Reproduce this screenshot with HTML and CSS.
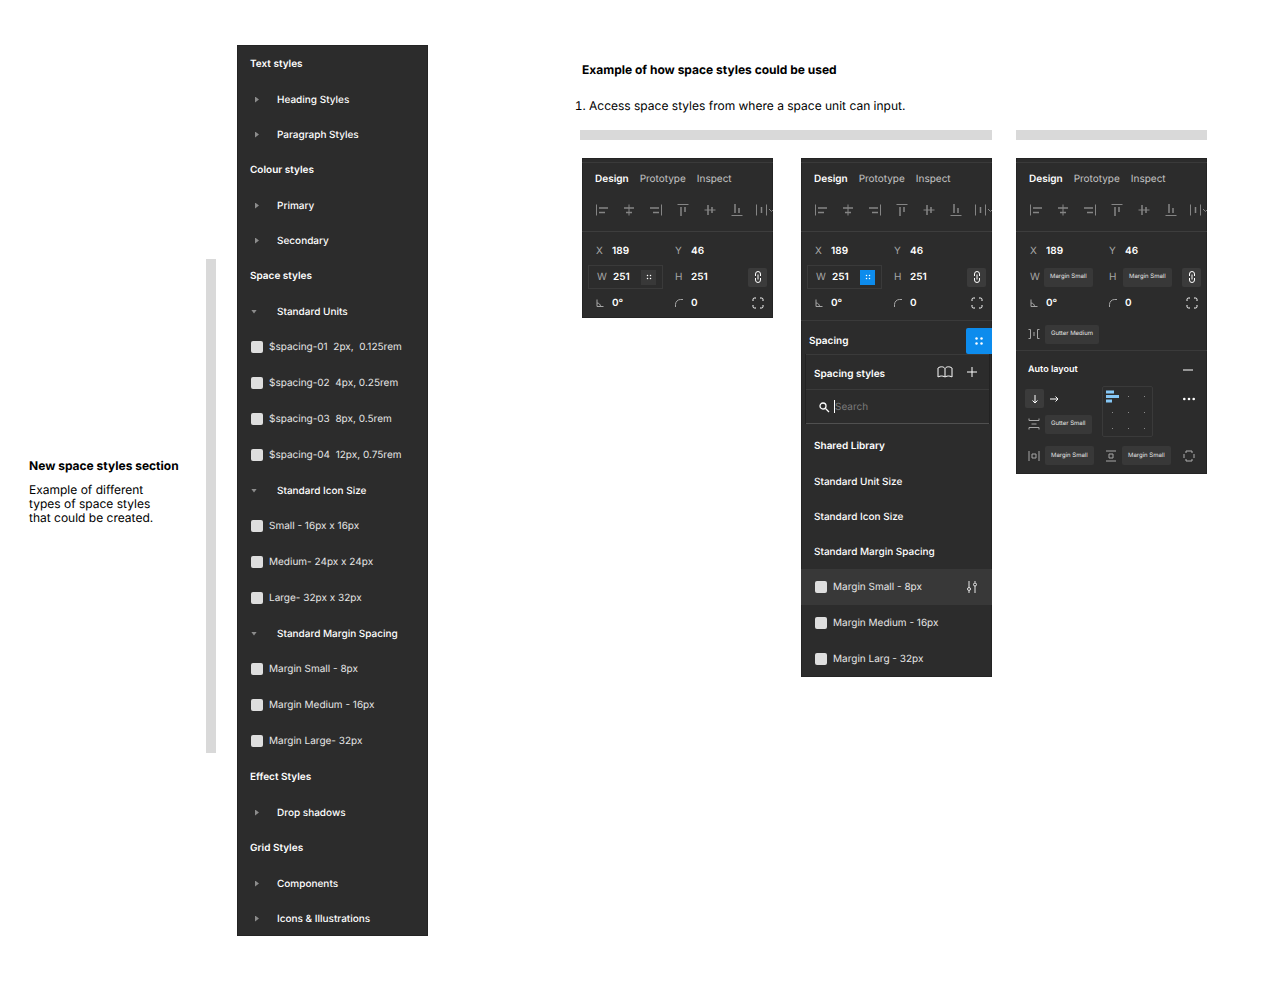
FILE: index.html
```
<!DOCTYPE html>
<html lang="en">
<head>

<meta charset="UTF-8">
<meta name="viewport" content="width=device-width, initial-scale=1">
<title>Space styles</title>
<link rel="stylesheet" href="styles.css">

</head>
<body>

<!-- shared icons -->
<svg class="sprite" aria-hidden="true">
	<symbol id="align-left" viewBox="0 0 12 12"><path d="M.5 .5v11"/><path stroke-width="1.500" d="M3 4h9M3 8.500h6"/></symbol>
	<symbol id="align-center" viewBox="0 0 12 12"><path d="M6 .5v11"/><path stroke-width="1.500" d="M1 4h10M3 8.500h6"/></symbol>
	<symbol id="align-right" viewBox="0 0 12 12"><path d="M11.500 .5v11"/><path stroke-width="1.500" d="M0 4h9M3 8.500h6"/></symbol>
	<symbol id="align-top" viewBox="0 0 12 12"><path d="M.5 .5h11"/><path stroke-width="1.500" d="M4 3v9M8 3v5"/></symbol>
	<symbol id="align-middle" viewBox="0 0 12 12"><path d="M.5 6h11"/><path stroke-width="1.500" d="M4 1v10M8 3v6"/></symbol>
	<symbol id="align-bottom" viewBox="0 0 12 12"><path d="M.5 11.500h11"/><path stroke-width="1.500" d="M4 0v9M8 4v5"/></symbol>
	<symbol id="distribute" viewBox="0 0 18 12"><path d="M1.500 .5v11M11.500 .5v11M14 5l2.500 2.500L19 5"/><path stroke-width="1.500" d="M6.500 3v6"/></symbol>
	<symbol id="angle" viewBox="0 0 12 12"><path d="M3 2.500v7h6.500M3 6c2 0 3.500 1.500 3.500 3.500"/></symbol>
	<symbol id="corner" viewBox="0 0 12 12"><path d="M2.500 10V7.500a5 5 0 0 1 5-5H10"/></symbol>
	<symbol id="link" viewBox="0 0 12 12"><path d="M3.500 5V3a2.500 2.500 0 0 1 5 0v2M3.500 7v2a2.500 2.500 0 0 0 5 0V7M6 3.500v5"/></symbol>
	<symbol id="corners" viewBox="0 0 12 12"><path d="M1 4V2.500A1.500 1.500 0 0 1 2.500 1H4M8 1h1.500A1.500 1.500 0 0 1 11 2.500V4M11 8v1.500A1.500 1.500 0 0 1 9.500 11H8M4 11H2.500A1.500 1.500 0 0 1 1 9.500V8"/></symbol>
	<symbol id="dots" viewBox="0 0 12 12"><g fill="currentColor" stroke="none"><circle cx="3" cy="3" r="1.500"/><circle cx="9" cy="3" r="1.500"/><circle cx="3" cy="9" r="1.500"/><circle cx="9" cy="9" r="1.500"/></g></symbol>
	<symbol id="gutter-x" viewBox="0 0 12 12"><path d="M.5 1.500h2v9h-2M6 4v4M11.500 1.500h-2v9h2"/></symbol>
	<symbol id="gutter-y" viewBox="0 0 12 12"><path d="M1 .5v2h10v-2M3.500 6h5M1 11.500v-2h10v2"/></symbol>
	<symbol id="padding-x" viewBox="0 0 12 12"><path d="M1 1v10M11 1v10M4 4h4v4H4z"/></symbol>
	<symbol id="padding-y" viewBox="0 0 12 12"><path d="M1 1h10M1 11h10M4 4h4v4H4z"/></symbol>
	<symbol id="padding-all" viewBox="0 0 12 12"><path d="M1 4v4M11 4v4M3 3V1h6v2M3 9v2h6V9"/></symbol>
	<symbol id="book" viewBox="0 0 16 12"><path d="M8 2.500C7 1 5.500 .8 4.500 .8 2.500 .8 1 2 1 2v9s1.500-1 3.500-1S8 11 8 11s1.500-1 3.500-1 3.500 1 3.500 1V2S13.500 .8 11.500 .8C10.500 .8 9 1 8 2.500zV11"/></symbol>
	<symbol id="plus" viewBox="0 0 12 12"><path d="M6 1v10M1 6h10"/></symbol>
	<symbol id="minus" viewBox="0 0 12 12"><path d="M1 6h10"/></symbol>
	<symbol id="search" viewBox="0 0 12 12"><circle cx="5" cy="5" r="3" stroke-width="1.300"/><path stroke-width="1.300" d="M7.500 7.500L11 11"/></symbol>
	<symbol id="sliders" viewBox="0 0 12 12"><path d="M3 0v6.500M3 10v2M9 0v1.500M9 5v7"/><circle cx="3" cy="8" r="1.500"/><circle cx="9" cy="3.500" r="1.500"/></symbol>
	<symbol id="arrow-down" viewBox="0 0 12 12"><path d="M6 2v8M3.500 7.500L6 10l2.500-2.500"/></symbol>
	<symbol id="arrow-right" viewBox="0 0 12 12"><path d="M2 6h8M7.500 3.500L10 6 7.500 8.500"/></symbol>
	<symbol id="more" viewBox="0 0 12 12"><g fill="currentColor" stroke="none"><circle cx="1.300" cy="6" r="1.300"/><circle cx="6" cy="6" r="1.300"/><circle cx="10.700" cy="6" r="1.300"/></g></symbol>
</svg>

<main class="board">

	<section class="overview">
		<div class="note">
			<h2>New space styles section</h2>
			<p>Example of different types of space styles that could be created.</p>
		</div>
		<div class="marker-bar"></div>
		<div class="style-panel">
			<h3 class="row heading">Text styles</h3>
			<button class="row folder">Heading Styles</button>
			<button class="row folder">Paragraph Styles</button>
			<h3 class="row heading">Colour styles</h3>
			<button class="row folder">Primary</button>
			<button class="row folder">Secondary</button>
			<h3 class="row heading">Space styles</h3>
			<button class="row folder open">Standard Units</button>
			<div class="row swatch">$spacing-01  2px,  0.125rem</div>
			<div class="row swatch">$spacing-02  4px, 0.25rem</div>
			<div class="row swatch">$spacing-03  8px, 0.5rem</div>
			<div class="row swatch">$spacing-04  12px, 0.75rem</div>
			<button class="row folder open">Standard Icon Size</button>
			<div class="row swatch">Small - 16px x 16px</div>
			<div class="row swatch">Medium- 24px x 24px</div>
			<div class="row swatch">Large- 32px x 32px</div>
			<button class="row folder open">Standard Margin Spacing</button>
			<div class="row swatch">Margin Small - 8px</div>
			<div class="row swatch">Margin Medium - 16px</div>
			<div class="row swatch">Margin Large- 32px</div>
			<h3 class="row heading">Effect Styles</h3>
			<button class="row folder">Drop shadows</button>
			<h3 class="row heading">Grid Styles</h3>
			<button class="row folder">Components</button>
			<button class="row folder">Icons &amp; Illustrations</button>
		</div>
	</section>

	<section class="usage">
		<h2>Example of how space styles could be used</h2>
		<ol>
			<li>Access space styles from where a space unit can input.</li>
		</ol>

		<div class="groups">
			<div class="group wide">
				<div class="bar"></div>
				<div class="panels">

					<div class="inspector">
						<nav class="tabs">
							<button class="active">Design</button>
							<button>Prototype</button>
							<button>Inspect</button>
						</nav>
						<div class="align">
							<button aria-label="Align left"><svg><use href="#align-left"/></svg></button>
							<button aria-label="Align centre"><svg><use href="#align-center"/></svg></button>
							<button aria-label="Align right"><svg><use href="#align-right"/></svg></button>
							<button aria-label="Align top"><svg><use href="#align-top"/></svg></button>
							<button aria-label="Align middle"><svg><use href="#align-middle"/></svg></button>
							<button aria-label="Align bottom"><svg><use href="#align-bottom"/></svg></button>
							<button aria-label="Distribute"><svg class="distribute"><use href="#distribute"/></svg></button>
						</div>
						<div class="fields">
							<label class="field"><span>X</span><input type="text" value="189"></label>
							<label class="field"><span>Y</span><input type="text" value="46"></label>
							<i></i>
							<div class="field focus">
								<label for="w1">W</label><input type="text" id="w1" value="251">
								<button class="token" aria-label="Space styles"><svg><use href="#dots"/></svg></button>
							</div>
							<label class="field"><span>H</span><input type="text" value="251"></label>
							<button class="tool pressed" aria-label="Lock ratio"><svg><use href="#link"/></svg></button>
							<label class="field"><span><svg><use href="#angle"/></svg></span><input type="text" value="0°" aria-label="Rotation"></label>
							<label class="field"><span><svg><use href="#corner"/></svg></span><input type="text" value="0" aria-label="Radius"></label>
							<button class="tool" aria-label="Corners"><svg><use href="#corners"/></svg></button>
						</div>
					</div>

					<div class="inspector">
						<nav class="tabs">
							<button class="active">Design</button>
							<button>Prototype</button>
							<button>Inspect</button>
						</nav>
						<div class="align">
							<button aria-label="Align left"><svg><use href="#align-left"/></svg></button>
							<button aria-label="Align centre"><svg><use href="#align-center"/></svg></button>
							<button aria-label="Align right"><svg><use href="#align-right"/></svg></button>
							<button aria-label="Align top"><svg><use href="#align-top"/></svg></button>
							<button aria-label="Align middle"><svg><use href="#align-middle"/></svg></button>
							<button aria-label="Align bottom"><svg><use href="#align-bottom"/></svg></button>
							<button aria-label="Distribute"><svg class="distribute"><use href="#distribute"/></svg></button>
						</div>
						<div class="fields">
							<label class="field"><span>X</span><input type="text" value="189"></label>
							<label class="field"><span>Y</span><input type="text" value="46"></label>
							<i></i>
							<div class="field focus">
								<label for="w2">W</label><input type="text" id="w2" value="251">
								<button class="token on" aria-label="Space styles"><svg><use href="#dots"/></svg></button>
							</div>
							<label class="field"><span>H</span><input type="text" value="251"></label>
							<button class="tool pressed" aria-label="Lock ratio"><svg><use href="#link"/></svg></button>
							<label class="field"><span><svg><use href="#angle"/></svg></span><input type="text" value="0°" aria-label="Rotation"></label>
							<label class="field"><span><svg><use href="#corner"/></svg></span><input type="text" value="0" aria-label="Radius"></label>
							<button class="tool" aria-label="Corners"><svg><use href="#corners"/></svg></button>
						</div>
						<div class="spacing">
							<h3>Spacing</h3>
							<button aria-label="Space styles"><svg><use href="#dots"/></svg></button>
						</div>
						<div class="picker">
							<div class="picker-head">
								<h3>Spacing styles</h3>
								<button aria-label="Library"><svg class="book"><use href="#book"/></svg></button>
								<button aria-label="Add style"><svg><use href="#plus"/></svg></button>
							</div>
							<label class="search">
								<svg><use href="#search"/></svg>
								<input type="text" placeholder="Search" aria-label="Search">
							</label>
						</div>
						<div class="library">
							<h3 class="row heading">Shared Library</h3>
							<button class="row group-name">Standard Unit Size</button>
							<button class="row group-name">Standard Icon Size</button>
							<button class="row group-name">Standard Margin Spacing</button>
							<div class="row swatch selected"><span>Margin Small - 8px</span><button aria-label="Edit style"><svg><use href="#sliders"/></svg></button></div>
							<div class="row swatch">Margin Medium - 16px</div>
							<div class="row swatch">Margin Larg - 32px</div>
						</div>
					</div>

				</div>
			</div>

			<div class="group">
				<div class="bar"></div>
				<div class="inspector">
					<nav class="tabs">
						<button class="active">Design</button>
						<button>Prototype</button>
						<button>Inspect</button>
					</nav>
					<div class="align">
						<button aria-label="Align left"><svg><use href="#align-left"/></svg></button>
						<button aria-label="Align centre"><svg><use href="#align-center"/></svg></button>
						<button aria-label="Align right"><svg><use href="#align-right"/></svg></button>
						<button aria-label="Align top"><svg><use href="#align-top"/></svg></button>
						<button aria-label="Align middle"><svg><use href="#align-middle"/></svg></button>
						<button aria-label="Align bottom"><svg><use href="#align-bottom"/></svg></button>
						<button aria-label="Distribute"><svg class="distribute"><use href="#distribute"/></svg></button>
					</div>
					<div class="fields">
						<label class="field"><span>X</span><input type="text" value="189"></label>
						<label class="field"><span>Y</span><input type="text" value="46"></label>
						<i></i>
						<div class="field"><span>W</span><button class="chip">Margin Small</button></div>
						<div class="field"><span>H</span><button class="chip">Margin Small</button></div>
						<button class="tool pressed" aria-label="Lock ratio"><svg><use href="#link"/></svg></button>
						<label class="field"><span><svg><use href="#angle"/></svg></span><input type="text" value="0°" aria-label="Rotation"></label>
						<label class="field"><span><svg><use href="#corner"/></svg></span><input type="text" value="0" aria-label="Radius"></label>
						<button class="tool" aria-label="Corners"><svg><use href="#corners"/></svg></button>
					</div>
					<div class="gutter">
						<svg><use href="#gutter-x"/></svg>
						<button class="chip">Gutter Medium</button>
					</div>
					<div class="auto-head">
						<h3>Auto layout</h3>
						<button aria-label="Remove auto layout"><svg><use href="#minus"/></svg></button>
					</div>
					<div class="auto-layout">
						<div class="direction">
							<button class="tool pressed" aria-label="Vertical"><svg><use href="#arrow-down"/></svg></button>
							<button class="tool" aria-label="Horizontal"><svg><use href="#arrow-right"/></svg></button>
						</div>
						<div class="align-grid">
							<svg viewBox="0 0 13 13"><path d="M0 2h8M0 6.500h13M0 11h6"/></svg>
							<b></b><b></b><b></b><b></b><b></b><b></b><b></b><b></b>
						</div>
						<button class="tool" aria-label="More"><svg><use href="#more"/></svg></button>
						<div class="pair"><svg><use href="#gutter-y"/></svg><button class="chip">Gutter Small</button></div>
						<i></i>
						<div class="pair"><svg><use href="#padding-x"/></svg><button class="chip">Margin Small</button></div>
						<div class="pair"><svg><use href="#padding-y"/></svg><button class="chip">Margin Small</button></div>
						<button class="tool muted" aria-label="Separate padding"><svg><use href="#padding-all"/></svg></button>
					</div>
				</div>
			</div>
		</div>
	</section>

</main>

</body>
</html>
```
FILE: styles.css
```
*
{
	box-sizing: border-box;
}

body
{
	margin: 0;
	background-color: #ffffff;
	color: #000000;
	font-family: Inter, "Liberation Sans", sans-serif;
	font-size: 12px;
	line-height: 14px;
	text-rendering: geometricPrecision;
}

h2, h3, p, ol
{
	margin: 0;
	font-size: inherit;
}

button, input
{
	margin: 0;
	padding: 0;
	border: none;
	background: none;
	color: inherit;
	font: inherit;
	text-align: left;
	text-rendering: inherit;
}

button
{
	display: flex;
	align-items: center;
	justify-content: center;
}

svg
{
	display: block;
	flex: none;
	width: 12px;
	height: 12px;
	fill: none;
	stroke: currentColor;
}

.sprite
{
	position: absolute;
	width: 0;
	height: 0;
}

.board
{
	display: flex;
	align-items: flex-start;
	justify-content: space-between;
	padding: 45px 59px 64px 29px;
}

/* left side: the list of styles */

.overview
{
	display: flex;
	flex: 0 1 399px;
}

.note
{
	flex: 1;
	align-self: center;
	padding-top: 3px;
}

.note h2
{
	white-space: nowrap;
}

.note p
{
	max-width: 136px;
	margin-top: 10px;
}

.marker-bar
{
	width: 10px;
	margin: 214px 21px 183px 0;
	background-color: #d9d9d9;
}

.style-panel
{
	width: 191px;
	padding-top: 1px;
	box-shadow: inset 0 0 0 1px #242424;
	background-color: #2c2c2c;
	color: #ffffff;
	font-size: 10px;
}

.row
{
	display: flex;
	align-items: center;
	justify-content: flex-start;
	width: 100%;
	height: 36px;
	white-space: pre;
}

.heading
{
	padding-left: 13px;
	font-weight: 600;
}

.folder
{
	height: 35px;
	padding-left: 18px;
	font-weight: 500;
}

.folder::before
{
	content: "";
	width: 22px;
	height: 6px;
	background: linear-gradient(#8c8c8c, #8c8c8c) no-repeat 0 0 / 4px 6px;
	clip-path: polygon(0 0, 4px 3px, 0 6px);
}

.folder.open
{
	padding-left: 14px;
}

.folder.open::before
{
	width: 26px;
	height: 4px;
	background-size: 6px 4px;
	clip-path: polygon(0 0, 6px 0, 3px 4px);
}

.swatch
{
	gap: 6px;
	padding-left: 14px;
	color: #e6e6e6;
}

.swatch::before
{
	content: "";
	width: 12px;
	height: 12px;
	border-radius: 2px;
	background-color: #dedede;
}

/* right side: the inspector panels */

.usage
{
	flex: 0 1 627px;
	min-width: 0;
	padding-top: 18px;
}

.usage h2
{
	padding-left: 2px;
}

.usage ol
{
	margin: 22px 0 17px;
	padding-left: 9px;
}

.groups
{
	display: flex;
	align-items: flex-start;
	gap: 24px;
}

.group
{
	flex: 1 1 191px;
	min-width: 0;
}

.group.wide
{
	flex: 1 1 412px;
}

.bar
{
	height: 10px;
	margin-bottom: 18px;
	background-color: #d9d9d9;
}

.panels
{
	display: flex;
	align-items: flex-start;
	gap: 28px;
	padding-left: 2px;
}

.inspector
{
	flex: 1;
	min-width: 0;
	overflow: hidden;
	box-shadow: inset 0 0 0 1px #242424;
	background-color: #2c2c2c;
	color: #ffffff;
	font-size: 10px;
}

.tabs
{
	display: flex;
	gap: 11px;
	height: 31px;
	margin-top: 4px;
	padding: 2px 0 0 13px;
	border-top: 1px solid #3a3a3a;
	color: #c4c4c4;
}

.tabs .active
{
	color: #ffffff;
	font-weight: 600;
}

.align
{
	display: flex;
	height: 39px;
	padding: 0 0 4px 6px;
	border-bottom: 1px solid #3d3d3d;
	color: #858585;
}

.align button
{
	flex: none;
	width: 27px;
}

.align .distribute
{
	width: 18px;
}

.fields
{
	display: grid;
	grid-template-columns: 79px 73px 19px;
	grid-auto-rows: 26px;
	align-items: center;
	padding: 6px 0 2px 14px;
}

.field
{
	display: flex;
	align-items: center;
}

.field span, .field label
{
	width: 16px;
	color: #a6a6a6;
}

.field input
{
	width: 26px;
	font-weight: 600;
}

.field svg
{
	margin-left: -2px;
}

.field .chip
{
	margin-left: -2px;
}

.field.focus
{
	width: 75px;
	height: 24px;
	margin-left: -8px;
	padding: 0 6px 0 8px;
	border: 1px solid #3a3a3a;
}

.token
{
	width: 15px;
	height: 15px;
	margin-left: auto;
	background-color: #383838;
}

.token svg
{
	width: 6px;
	height: 6px;
	margin: 0;
}

.token.on
{
	background-color: #0d8ced;
}

.tool
{
	width: 19px;
	height: 19px;
	border-radius: 2px;
}

.tool.pressed
{
	background-color: #3b3b3b;
}

.tool.muted
{
	color: #b0b0b0;
}

.chip
{
	height: 19px;
	padding: 0 6px;
	border-radius: 2px;
	background-color: #383838;
	color: #e6e6e6;
	font-size: 6px;
	white-space: nowrap;
}

.spacing
{
	display: flex;
	align-items: center;
	justify-content: space-between;
	margin-top: 2px;
	padding: 7px 0 0 8px;
	border-top: 1px solid #3a3a3a;
}

.spacing h3, .picker h3
{
	font-weight: 600;
}

.spacing button
{
	width: 26px;
	height: 26px;
	border-radius: 2px 0 0 2px;
	background-color: #0d8ced;
}

.spacing button svg
{
	width: 10px;
	height: 10px;
}

.picker
{
	margin: 0 3px 0 5px;
	border: 1px solid #3a3a3a;
	border-width: 1px 0;
	border-bottom-color: #505050;
	box-shadow: -1px 0 #222222, 1px 0 #222222;
}

.picker-head
{
	display: flex;
	align-items: center;
	gap: 13px;
	height: 34px;
	padding: 0 11px 0 8px;
}

.picker-head h3
{
	flex: 1;
	padding-top: 3px;
}

.picker .book
{
	width: 16px;
}

.search
{
	display: flex;
	align-items: center;
	gap: 4px;
	height: 34px;
	padding-left: 12px;
	border-top: 1px solid #3a3a3a;
}

.search input
{
	width: 100px;
	height: 13px;
	border-left: 1px solid #ffffff;
}

.search input::placeholder
{
	color: #7a7a7a;
}

.library
{
	padding-top: 4px;
}

.group-name
{
	height: 35px;
	padding-left: 13px;
	font-weight: 500;
}

.selected
{
	padding-right: 14px;
	background-color: #383838;
}

.selected button
{
	margin-left: auto;
}

.gutter
{
	display: flex;
	align-items: center;
	gap: 5px;
	height: 32px;
	padding-left: 12px;
	color: #a6a6a6;
}

.auto-head
{
	display: flex;
	align-items: center;
	justify-content: space-between;
	height: 36px;
	padding: 2px 13px 0 12px;
	border-top: 1px solid #3a3a3a;
	font-size: 9px;
}

.auto-head h3
{
	font-weight: 600;
}

.auto-layout
{
	display: grid;
	grid-template-columns: 77px 77px 19px;
	grid-template-rows: 25px 26px 37px;
	align-items: center;
	padding-left: 9px;
}

.direction
{
	display: flex;
}

.align-grid
{
	display: grid;
	grid-row: span 2;
	grid-template-columns: repeat(3, 16px);
	grid-template-rows: repeat(3, 16px);
	place-items: center;
	width: 51px;
	height: 51px;
	padding: 1px;
	border: 1px solid #3a3a3a;
	border-radius: 2px;
}

.align-grid svg
{
	width: 13px;
	height: 13px;
	stroke: #86c7f5;
	stroke-width: 3px;
}

.align-grid b
{
	width: 1px;
	height: 1px;
	background-color: #8c8c8c;
}

.pair
{
	display: flex;
	align-items: center;
	gap: 5px;
	padding-left: 3px;
	color: #a6a6a6;
}
```
